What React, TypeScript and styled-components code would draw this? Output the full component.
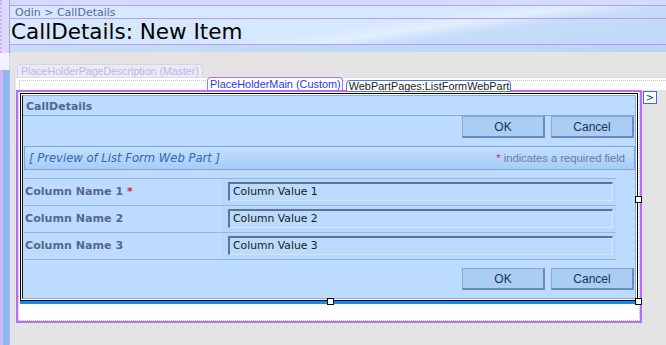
import styled, { createGlobalStyle } from "styled-components";

const GlobalStyle = createGlobalStyle`
  html, body { margin: 0; padding: 0; }
  body {
    background: #e4e4e4;
    width: 666px;
    height: 345px;
    overflow: hidden;
    font-family: "DejaVu Sans", Verdana, sans-serif;
  }
`;

const Page = styled.div`
  display: grid;
  grid-template-columns: 10px 1fr;
  height: 345px;
`;

const LeftRail = styled.div`
  display: flex;
  flex-direction: column;
`;

const RailTop = styled.div`
  height: 53px;
  box-sizing: border-box;
  background: #dcd9fc;
  border-left: 2px dotted #c6b2f6;
  border-right: 1px solid #b89af2;
`;

const RailGap = styled.div`
  height: 17px;
  background: #f3f1fb;
  border-right: 1px dotted #cbb8f6;
`;

const RailBody = styled.div`
  flex: 1;
  background: #8fb8ee;
  border-left: 3px solid #cdb8f8;
  border-right: 1px dotted #c6b2f6;
`;

const Main = styled.div`
  display: flex;
  flex-direction: column;
`;

const Header = styled.div`
  background: linear-gradient(172deg, #d6e8ff 0%, #d6e8ff 52%, #e2eeff 60%, #c6dcfa 68%, #bcd5f8 100%);
`;

const TopStrip = styled.div`
  height: 5px;
  background: #d4dcfb;
  border-bottom: 1px solid #b99cf3;
`;

const Crumb = styled.div`
  height: 12px;
  line-height: 13px;
  padding-left: 5px;
  font-size: 11px;
  color: #5b6b8f;
  border-bottom: 1px solid #b99cf3;
`;

const Title = styled.h1`
  margin: 0;
  height: 25px;
  line-height: 26px;
  padding-left: 1px;
  font-size: 21.5px;
  font-weight: normal;
  color: #000;
  border-bottom: 1px solid #b99cf3;
`;

const HeaderFoot = styled.div`
  height: 7px;
  background: linear-gradient(90deg, #c8dcf8, #bcd4f6);
`;

const Content = styled.div`
  padding: 12px 0 0 6px;
  display: flex;
  flex-direction: column;
  align-items: flex-start;
`;

const MasterTag = styled.div`
  margin-left: 1px;
  height: 13px;
  box-sizing: border-box;
  padding: 0 3px;
  border: 1px solid #d9cef6;
  border-bottom: none;
  border-radius: 4px 4px 0 0;
  background: #ebebf3;
  color: #c2b4ee;
  font-family: "Liberation Sans", Arial, sans-serif;
  font-size: 10.6px;
  line-height: 12px;
  white-space: nowrap;
`;

const TabStrip = styled.div`
  position: relative;
  align-self: stretch;
  height: 13px;
  box-sizing: border-box;
  border-top: 1px solid #e2d6fb;
  background: #fff;
  display: flex;
  align-items: flex-start;
  padding-left: 191px;

  &::before {
    content: "";
    position: absolute;
    left: 3px;
    right: 0;
    top: 2px;
    border-top: 1px dotted #c4c4c4;
  }
  &::after {
    content: "";
    position: absolute;
    left: 3px;
    top: 2px;
    bottom: 0;
    border-left: 1px dotted #c4c4c4;
  }
`;

const Tab = styled.div<{ $tone: "main" | "part" }>`
  position: relative;
  z-index: 2;
  box-sizing: border-box;
  padding: 0 1px 0 2px;
  height: ${(p) => (p.$tone === "main" ? "13px" : "12px")};
  margin-top: ${(p) => (p.$tone === "main" ? "-1px" : "2px")};
  margin-left: ${(p) => (p.$tone === "main" ? "0" : "3px")};
  border: 1px solid ${(p) => (p.$tone === "main" ? "#b06ff8" : "#4f7dcc")};
  border-bottom: ${(p) => (p.$tone === "main" ? "none" : "1px solid #4f7dcc")};
  border-radius: 4px 4px 0 0;
  background: #fff;
  color: ${(p) => (p.$tone === "main" ? "#1f3dd6" : "#222")};
  font-family: "Liberation Sans", Arial, sans-serif;
  font-size: 10.9px;
  line-height: ${(p) => (p.$tone === "main" ? "12px" : "10px")};
  white-space: nowrap;
`;

const Stage = styled.div`
  display: flex;
  align-items: flex-start;
`;

const PlaceHolderBox = styled.div`
  width: 626px;
  height: 233px;
  box-sizing: border-box;
  border: 2px solid #b86bff;
  background: #fff;
`;

const DottedArea = styled.div`
  height: 100%;
  box-sizing: border-box;
  border: 1px dotted #bdbdbd;
  border-top: none;
  padding: 1px 1px 0 1px;
`;

const Frame = styled.div`
  position: relative;
  height: 208px;
  box-sizing: border-box;
  border: 1px solid #000;
  padding: 1px;
  background: #fff;
  box-shadow: 0 3px 0 #0b8ff0;
`;

const Handle = styled.span<{ $x: string; $y: string }>`
  position: absolute;
  left: ${(p) => p.$x};
  top: ${(p) => p.$y};
  width: 7px;
  height: 7px;
  box-sizing: border-box;
  border: 1px solid #000;
  background: #fff;
  z-index: 3;
`;

const Panel = styled.div`
  height: 100%;
  box-sizing: border-box;
  border: 1px solid #86aee2;
  border-left: 1px solid #1a1a1a;
  background: #bddcfd;
  display: flex;
  flex-direction: column;
`;

const PartTitle = styled.div`
  height: 20px;
  box-sizing: border-box;
  border-bottom: 1px solid #7ea8de;
  padding: 4px 0 0 3px;
  font-size: 11px;
  font-weight: bold;
  color: #4d6891;
`;

const Toolbar = styled.div<{ $top: number; $height: number }>`
  height: ${(p) => p.$height}px;
  box-sizing: border-box;
  padding-top: ${(p) => p.$top}px;
  padding-right: 1px;
  display: flex;
  justify-content: flex-end;
  gap: 6px;
`;

const Button = styled.button`
  width: 83px;
  height: 22px;
  box-sizing: border-box;
  margin: 0;
  padding: 0;
  background: #a9cdf4;
  border: 1px solid #86a8d6;
  border-right: 2px solid #6a8bbb;
  border-bottom: 2px solid #6a8bbb;
  color: #22334f;
  font-family: "Liberation Sans", Arial, sans-serif;
  font-size: 12px;
`;

const PreviewBar = styled.div`
  margin-left: 1px;
  height: 24px;
  box-sizing: border-box;
  border: 1px solid #7aa7e2;
  background: linear-gradient(180deg, #c4e0fd 0%, #b4d6fb 50%, #a6cdf7 100%);
  display: flex;
  align-items: center;
  justify-content: space-between;
  padding: 0 9px 0 4px;
`;

const PreviewNote = styled.span`
  font-size: 11.6px;
  font-style: italic;
  color: #3a66ad;
`;

const RequiredNote = styled.span`
  font-family: "Liberation Sans", Arial, sans-serif;
  font-size: 11.2px;
  color: #6a7d9c;
`;

const Star = styled.span`
  color: #d3284f;
`;

const FieldTable = styled.div`
  margin: 8px 19px 0 1px;
  border-bottom: 1px solid #94b7e2;
`;

const FieldRow = styled.div`
  display: grid;
  grid-template-columns: 198px 1fr;
  height: 27px;
  box-sizing: border-box;
  border-top: 1px solid #94b7e2;
`;

const Label = styled.div`
  padding: 6px 0 0 1px;
  font-size: 11.1px;
  font-weight: bold;
  color: #55688c;
`;

const ValueCell = styled.div`
  background: #b7d7fb;
  padding: 3px 0 0 6px;
`;

const Input = styled.div`
  width: 385px;
  height: 19px;
  box-sizing: border-box;
  border-top: 2px solid #5d7295;
  border-left: 2px solid #5d7295;
  border-right: 1px solid #d2e5fc;
  border-bottom: 1px solid #d2e5fc;
  background: #badbfc;
  padding-left: 3px;
  font-size: 10.8px;
  line-height: 16px;
  color: #1a1a1a;
`;

const NextButton = styled.div`
  margin: 1px 0 0 1px;
  width: 14px;
  height: 13px;
  box-sizing: border-box;
  border: 1px solid #3b6fc8;
  background: #fff;
  color: #2a3f6a;
  font-family: "DejaVu Sans", sans-serif;
  font-size: 10px;
  line-height: 11px;
  text-align: center;
`;

const fields = [
  { name: "Column Name 1", value: "Column Value 1", required: true },
  { name: "Column Name 2", value: "Column Value 2", required: false },
  { name: "Column Name 3", value: "Column Value 3", required: false },
];

export default function App() {
  return (
    <>
      <GlobalStyle />
      <Page>
        <LeftRail>
          <RailTop />
          <RailGap />
          <RailBody />
        </LeftRail>
        <Main>
          <Header>
            <TopStrip />
            <Crumb>Odin &gt; CallDetails</Crumb>
            <Title>CallDetails: New Item</Title>
            <HeaderFoot />
          </Header>
          <Content>
            <MasterTag>PlaceHolderPageDescription (Master)</MasterTag>
            <TabStrip>
              <Tab $tone="main">PlaceHolderMain (Custom)</Tab>
              <Tab $tone="part">WebPartPages:ListFormWebPart</Tab>
            </TabStrip>
            <Stage>
              <PlaceHolderBox>
                <DottedArea>
                  <Frame>
                    <Handle $x="614px" $y="102px" />
                    <Handle $x="306px" $y="204px" />
                    <Handle $x="614px" $y="204px" />
                    <Panel>
                      <PartTitle>CallDetails</PartTitle>
                      <Toolbar $top={0} $height={30}>
                        <Button>OK</Button>
                        <Button>Cancel</Button>
                      </Toolbar>
                      <PreviewBar>
                        <PreviewNote>[ Preview of List Form Web Part ]</PreviewNote>
                        <RequiredNote>
                          <Star>*</Star> indicates a required field
                        </RequiredNote>
                      </PreviewBar>
                      <FieldTable>
                        {fields.map((f) => (
                          <FieldRow key={f.name}>
                            <Label>
                              {f.name}
                              {f.required && <Star> *</Star>}
                            </Label>
                            <ValueCell>
                              <Input>{f.value}</Input>
                            </ValueCell>
                          </FieldRow>
                        ))}
                      </FieldTable>
                      <Toolbar $top={8} $height={36}>
                        <Button>OK</Button>
                        <Button>Cancel</Button>
                      </Toolbar>
                    </Panel>
                  </Frame>
                </DottedArea>
              </PlaceHolderBox>
              <NextButton>&gt;</NextButton>
            </Stage>
          </Content>
        </Main>
      </Page>
    </>
  );
}
